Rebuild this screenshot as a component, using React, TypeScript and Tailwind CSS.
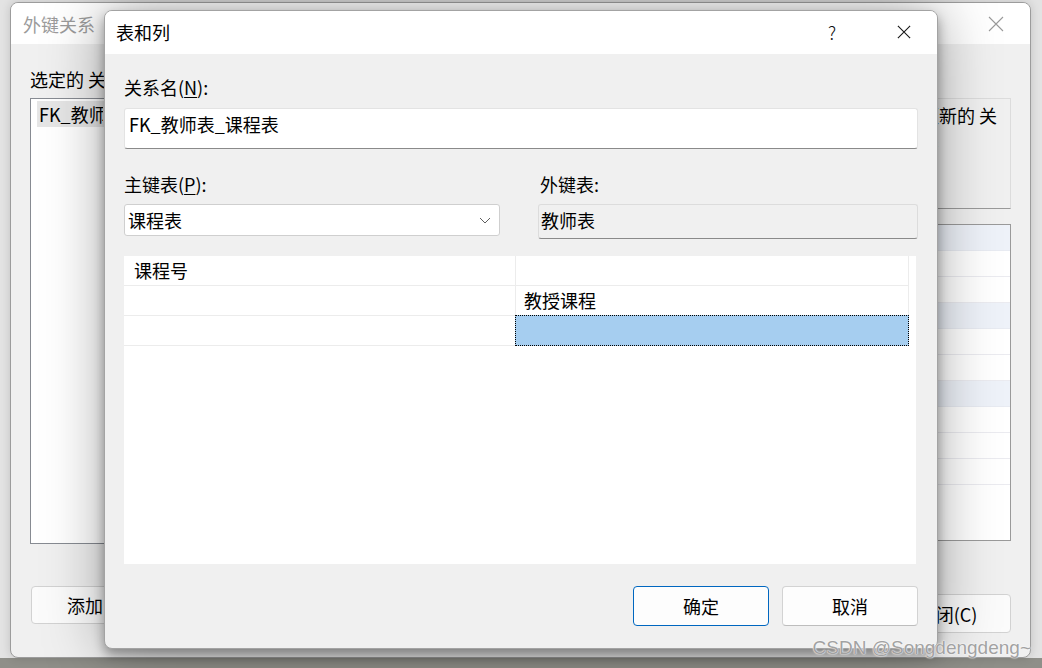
import React from "react";

function XIcon({ size, color, stroke }: { size: number; color: string; stroke: number }) {
  return (
    <svg width={size} height={size} viewBox="0 0 16 16" fill="none">
      <path d="M1 1 L15 15 M15 1 L1 15" stroke={color} strokeWidth={stroke} />
    </svg>
  );
}

function BackgroundWindow() {
  const rows = ["c", "w", "w", "c", "w", "w", "c", "w", "w", "w"];
  return (
    <div className="absolute left-[10px] top-[2px] w-[1021px] h-[656px] rounded-[8px] border border-[#9c9c9c] bg-[#f0f0f0] overflow-hidden flex flex-col shadow-[0_0_10px_rgba(0,0,0,0.15)]">
      <div className="h-[41px] bg-white flex items-center justify-between pl-[12px] pr-[26px] shrink-0">
        <span className="text-[#9b9b9b]">外键关系</span>
        <XIcon size={16} color="#9a9a9a" stroke={1.1} />
      </div>
      <div className="flex-1 flex justify-between pl-[19px] pr-[19px] pt-[23px]">
        <div className="w-[420px] flex flex-col">
          <div className="h-[24px] leading-[24px] w-[74px] overflow-hidden whitespace-nowrap">选定的 关系(S):</div>
          <div className="mt-[7px] h-[446px] border border-[#878b92] bg-white pt-[2px] pl-[6px]">
            <div className="h-[26px] w-[300px] bg-[#e6e6e6] pl-[2px] flex items-center">
              <span className="w-[64px] overflow-hidden whitespace-nowrap">FK_教师表_课程表</span>
            </div>
          </div>
          <div className="mt-[42px] h-[38px] w-[135px] ml-[1px] rounded-[4px] border border-[#d2d2d2] bg-[#fbfbfb] flex items-center pl-[35px]">
            <span className="w-[36px] overflow-hidden whitespace-nowrap">添加(A)</span>
          </div>
        </div>
        <div className="w-[127px] flex flex-col items-end">
          <div className="mt-[31px] h-[111px] w-[96px] border border-[#dcdcdc] border-b-[#9a9a9a] bg-[#f0f0f0] pl-[5px] pt-[4px] leading-[24px]">
            更新的 关系
          </div>
          <div className="mt-[15px] h-[317px] w-[96px] border border-[#9a9a9a] bg-white flex flex-col">
            {rows.map((r, i) => (
              <div
                key={i}
                className={
                  r === "c"
                    ? "h-[26px] bg-[#eef2f9] border-b border-[#e8ebf2]"
                    : "h-[26px] bg-white border-b border-[#ebebf0]"
                }
              />
            ))}
          </div>
          <div className="mt-[53px] h-[39px] w-[127px] rounded-[4px] border border-[#d2d2d2] bg-[#fbfbfb] flex items-center justify-center">
            关闭(C)
          </div>
        </div>
      </div>
    </div>
  );
}

function Dialog() {
  return (
    <div className="absolute left-[104px] top-[10px] w-[834px] h-[639px] rounded-[8px] border border-[#a3a3a3] bg-[#f0f0f0] overflow-hidden flex flex-col shadow-[0_6px_12px_rgba(0,0,0,0.35),0_0_60px_rgba(0,0,0,0.35)]">
      <div className="h-[43px] bg-white flex items-center pl-[11px] pr-[26px] pb-[2px] shrink-0">
        <span className="text-black">表和列</span>
        <span className="ml-auto w-[20px] text-center text-[#111] font-light">?</span>
        <span className="ml-[55px] flex items-center">
          <XIcon size={14} color="#1a1a1a" stroke={1.3} />
        </span>
      </div>
      <div className="flex-1 flex flex-col pl-[19px] pr-[19px] pt-[21px] pb-[22px]">
        <div className="h-[24px] leading-[24px]">
          关系名(<span className="underline underline-offset-2">N</span>):
        </div>
        <div className="mt-[9px] h-[41px] bg-white border border-[#e3e3e3] border-b-[#8a8a8a] rounded-[3px] pl-[4px] pt-[3px] leading-[24px]">
          FK_教师表_课程表
        </div>
        <div className="mt-[23px] grid grid-cols-[376px_380px] gap-x-[38px] items-start">
          <div className="h-[24px] leading-[24px]">
            主键表(<span className="underline underline-offset-2">P</span>):
          </div>
          <div className="h-[24px] leading-[24px] pl-[2px]">外键表:</div>
          <div className="mt-[8px] h-[32px] bg-white border border-[#cfcfcf] rounded-[3px] pl-[3px] pr-[8px] flex items-center justify-between">
            <span>课程表</span>
            <svg width="12" height="7" viewBox="0 0 12 7" fill="none">
              <path d="M1 1 L6 6 L11 1" stroke="#5f5f5f" strokeWidth="1" />
            </svg>
          </div>
          <div className="mt-[8px] h-[35px] bg-[#f0f0f0] border border-[#dcdcdc] border-b-[#8a8a8a] rounded-[3px] pl-[2px] pb-[3px] flex items-center">
            教师表
          </div>
        </div>
        <div className="mt-[17px] h-[308px] w-[792px] bg-white flex flex-col">
          <div className="h-[30px] w-[785px] flex border-b border-[#ececec]">
            <div className="w-[392px] border-r border-[#ececec] pl-[10px] pb-[1px] flex items-center">课程号</div>
            <div className="flex-1 border-r border-[#ececec]" />
          </div>
          <div className="h-[30px] w-[785px] flex border-b border-[#ececec]">
            <div className="w-[392px] border-r border-[#ececec]" />
            <div className="flex-1 border-r border-[#ececec] pl-[8px] pb-[1px] flex items-center">教授课程</div>
          </div>
          <div className="h-[31px] w-[785px] flex -mt-[1px]">
            <div className="w-[391px] mt-[1px] h-[30px] border-b border-[#ececec]" />
            <div className="flex-1 border border-dotted border-black bg-[#a6cef0]" />
          </div>
        </div>
        <div className="mt-[22px] flex justify-end gap-[13px]">
          <div className="h-[40px] w-[136px] rounded-[4px] border border-[#0067c0] bg-[#fdfdfd] flex items-center justify-center">
            确定
          </div>
          <div className="h-[40px] w-[136px] rounded-[4px] border border-[#d3d3d3] border-b-[#bdbdbd] bg-[#fdfdfd] flex items-center justify-center">
            取消
          </div>
        </div>
      </div>
    </div>
  );
}

export default function App() {
  return (
    <div className="relative w-[1042px] h-[668px] overflow-hidden bg-[#e3e3e3] flex flex-col justify-end font-['Noto_Sans_CJK_SC',sans-serif] text-[18px] leading-[24px] text-black">
      <div className="h-[10px] bg-[#8f8f89]" />
      <BackgroundWindow />
      <Dialog />
      <div className="absolute right-[11px] bottom-[9px] font-['Liberation_Sans',sans-serif] text-[19px] leading-[22px] text-[#a2a2a2] [text-shadow:0_0_2px_#ffffff,0_0_1px_#ffffff]">
        CSDN @Songdengdeng~
      </div>
    </div>
  );
}
